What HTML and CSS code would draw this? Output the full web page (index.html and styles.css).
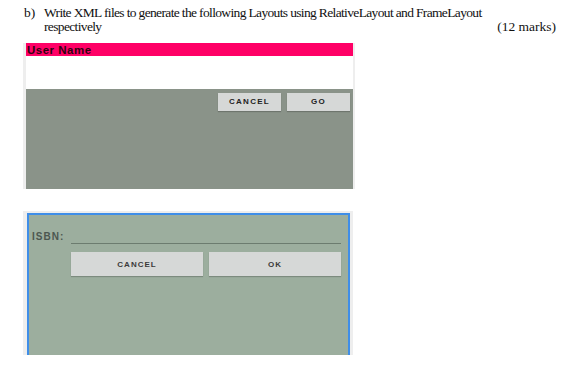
FILE: index.html
```html
<!DOCTYPE html>
<html>
<head>
<meta charset="utf-8">
<link rel="stylesheet" href="styles.css">
</head>
<body>
<div class="question">
  <div class="qnum">b)</div>
  <div class="qtext">
    <div>Write XML files to generate the following Layouts using RelativeLayout and FrameLayout</div>
    <div class="line2"><span>respectively</span><span class="marks">(12 marks)</span></div>
  </div>
</div>

<div class="shot1">
  <div class="strip"></div>
  <div class="screen1">
    <div class="uname">User Name</div>
    <div class="white"></div>
    <div class="grayarea">
      <div class="btn btn1">CANCEL</div>
      <div class="btn btn1">GO</div>
    </div>
  </div>
  <div class="strip"></div>
</div>

<div class="shot2">
  <div class="frame">
    <div class="isbnrow">
      <span class="isbn">ISBN:</span>
      <span class="field"></span>
    </div>
    <div class="btnrow">
      <div class="btn btn2">CANCEL</div>
      <div class="btn btn2">OK</div>
    </div>
  </div>
</div>
</body>
</html>
```

FILE: styles.css
```css
html, body {
  margin: 0;
  padding: 0;
  background: #ffffff;
}
body {
  width: 565px;
  height: 370px;
  overflow: hidden;
}
.question {
  display: flex;
  padding-top: 6px;
  padding-left: 24px;
  font-family: "Liberation Serif", serif;
  font-size: 13.5px;
  line-height: 14px;
  color: #111;
}
.qnum {
  width: 20px;
}
.qtext {
  width: 512px;
  letter-spacing: -0.65px;
}
.line2 {
  display: flex;
  justify-content: space-between;
}
.marks {
  letter-spacing: 0;
}
.shot1 {
  display: flex;
  margin-top: 9px;
  margin-left: 23px;
  width: 332px;
  height: 146px;
}
.strip {
  width: 3px;
  background: #eeeeee;
}
.strip:last-child {
  width: 2px;
}
.screen1 {
  width: 327px;
  display: flex;
  flex-direction: column;
}
.uname {
  height: 13px;
  background: #ff0066;
  font-family: "Liberation Sans", Arial, sans-serif;
  font-weight: bold;
  font-size: 11.5px;
  letter-spacing: 0.5px;
  line-height: 14px;
  color: #30000f;
  padding-left: 1px;
}
.white {
  height: 33px;
  background: #ffffff;
}
.grayarea {
  flex: 1;
  background: #8a9389;
  display: flex;
  justify-content: flex-end;
  align-items: flex-start;
  gap: 6px;
  padding: 4px 3px 0 0;
}
.btn {
  background: #d6d8d7;
  font-family: "Liberation Sans", Arial, sans-serif;
  font-weight: bold;
  text-align: center;
  color: #222;
  box-shadow: 0 1px 1px rgba(0,0,0,0.2);
}
.btn1 {
  width: 63px;
  height: 18px;
  line-height: 18px;
  font-size: 8px;
  letter-spacing: 1.3px;
}
.shot2 {
  margin-top: 22px;
  margin-left: 23px;
  width: 330px;
  height: 144px;
  background: #eeeeee;
  padding: 2px 3px 0 4px;
  box-sizing: border-box;
}
.frame {
  height: 142px;
  border: 2px solid #3f8ee8;
  border-bottom: none;
  background: #9cae9e;
  box-sizing: border-box;
  padding: 14px 7px 0 3px;
}
.isbnrow {
  display: flex;
  align-items: flex-end;
  height: 14px;
}
.isbn {
  width: 39px;
  font-family: "Liberation Sans", Arial, sans-serif;
  font-weight: bold;
  font-size: 10px;
  letter-spacing: 1px;
  line-height: 12px;
  color: #4c5750;
}
.field {
  flex: 1;
  height: 0;
  border-bottom: 1px solid #6c7c6f;
  margin-bottom: -1px;
}
.btnrow {
  display: flex;
  gap: 6px;
  margin-top: 9px;
  margin-left: 39px;
}
.btn2 {
  flex: 1;
  height: 24px;
  line-height: 25px;
  font-size: 8px;
  letter-spacing: 1px;
  color: #3a3a3a;
  font-weight: bold;
}
```
